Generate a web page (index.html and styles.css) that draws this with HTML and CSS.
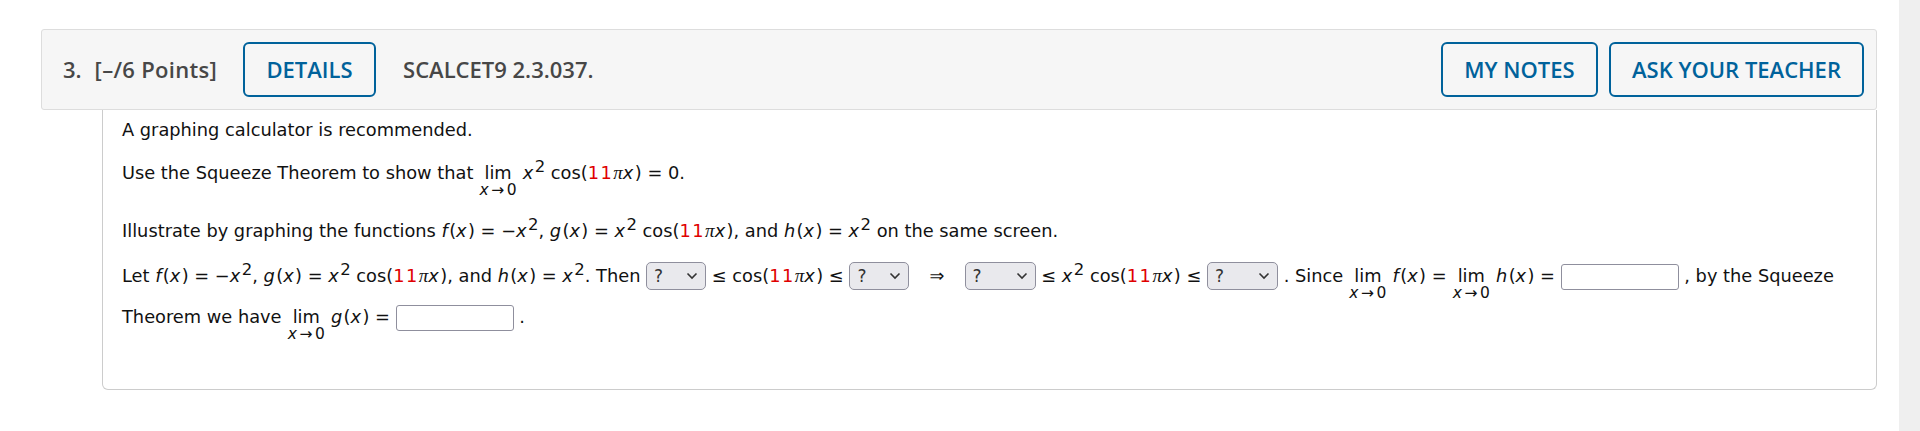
FILE: index.html
```html
<!DOCTYPE html>
<html lang="en">
<head>
<meta charset="utf-8">
<title>SCALCET9 2.3.037.</title>
<link rel="stylesheet" href="styles.css">
</head>
<body>
<div class="page">
  <main class="main">
    <header class="qhead">
      <span class="qnum">3.</span>
      <span class="qpts">[–/6 Points]</span>
      <button class="btn btn-details" type="button">DETAILS</button>
      <span class="qref">SCALCET9 2.3.037.</span>
      <span class="spacer"></span>
      <button class="btn btn-notes" type="button">MY NOTES</button>
      <button class="btn btn-ask" type="button">ASK YOUR TEACHER</button>
    </header>
    <section class="qbody">
      <p class="l1">A graphing calculator is recommended.</p>
      <p class="l2">Use the Squeeze Theorem to show that <span class="lim"><span>lim</span><span class="sub"><i>x</i><span class="to">→</span>0</span></span> <i>x</i><sup>2</sup> cos(<span class="red">11</span><span class="pi">π</span><i>x</i>) = 0.</p>
      <p class="l3">Illustrate by graphing the functions <i>f</i>(<i>x</i>) = −<i>x</i><sup>2</sup>, <i>g</i>(<i>x</i>) = <i>x</i><sup>2</sup> cos(<span class="red">11</span><span class="pi">π</span><i>x</i>), and <i>h</i>(<i>x</i>) = <i>x</i><sup>2</sup> on the same screen.</p>
      <p class="l4">Let <i>f</i>(<i>x</i>) = −<i>x</i><sup>2</sup>, <i>g</i>(<i>x</i>) = <i>x</i><sup>2</sup> cos(<span class="red">11</span><span class="pi">π</span><i>x</i>), and <i>h</i>(<i>x</i>) = <i>x</i><sup>2</sup>. Then <span class="sel"><select><option>?</option></select><svg viewBox="0 0 12 8"><path d="M1.5 1.500 6 6l4.500-4.500"/></svg></span> ≤ cos(<span class="red">11</span><span class="pi">π</span><i>x</i>) ≤ <span class="sel"><select><option>?</option></select><svg viewBox="0 0 12 8"><path d="M1.5 1.500 6 6l4.500-4.500"/></svg></span> <span class="arrow">⇒</span> <span class="sel wide"><select><option>?</option></select><svg viewBox="0 0 12 8"><path d="M1.5 1.500 6 6l4.500-4.500"/></svg></span> ≤ <i>x</i><sup>2</sup> cos(<span class="red">11</span><span class="pi">π</span><i>x</i>) ≤ <span class="sel wide"><select><option>?</option></select><svg viewBox="0 0 12 8"><path d="M1.5 1.500 6 6l4.500-4.500"/></svg></span> . Since <span class="lim"><span>lim</span><span class="sub"><i>x</i><span class="to">→</span>0</span></span> <i>f</i>(<i>x</i>) = <span class="lim"><span>lim</span><span class="sub"><i>x</i><span class="to">→</span>0</span></span> <i>h</i>(<i>x</i>) = <input class="ans" type="text"> , by the Squeeze</p>
      <p class="l5">Theorem we have <span class="lim"><span>lim</span><span class="sub"><i>x</i><span class="to">→</span>0</span></span> <i>g</i>(<i>x</i>) = <input class="ans" type="text"> .</p>
    </section>
  </main>
  <aside class="rail"></aside>
</div>
</body>
</html>
```
FILE: styles.css
```css
html, body {
  margin: 0;
  height: 100%;
  background: #fff;
}
.page {
  display: flex;
  height: 431px;
  overflow: hidden;
}
.main {
  flex: 1;
  padding: 29px 22px 0 41px;
  min-width: 0;
}
.rail {
  width: 21px;
  background: #efefef;
}
.qhead {
  display: flex;
  align-items: center;
  height: 81px;
  box-sizing: border-box;
  padding: 0 12px 0 21px;
  background: #f6f6f6;
  border: 1px solid #ddd;
  border-radius: 3px;
  font: 600 22px/1 "Open Sans", sans-serif;
  color: #474747;
}
.qnum, .qpts, .qref { padding-bottom: 2px; }
.qnum { margin-right: 13px; }
.qpts { margin-right: 26px; letter-spacing: 0.3px; }
.qref { margin-left: 27px; }
.spacer { flex: 1; }
.btn {
  height: 55px;
  box-sizing: border-box;
  background: transparent;
  border: 2px solid #00629b;
  border-radius: 6px;
  color: #00629b;
  font: 600 22px/1 "Open Sans", sans-serif;
  padding: 0 0 2px;
}
.btn-details { width: 133px; }
.btn-notes { width: 157px; margin-right: 11px; }
.btn-ask { width: 255px; }
.qbody {
  margin-left: 61px;
  height: 280px;
  box-sizing: border-box;
  padding: 7px 19px 0 19px;
  border: 1px solid #ccc;
  border-top: 0;
  border-radius: 0 0 6px 6px;
  font: 17.8px/41px "DejaVu Sans", Verdana, sans-serif;
  color: #111;
}
.qbody p { margin: 0; }
.qbody i { letter-spacing: 1.4px; }
.l1 { height: 26px; line-height: 26px; }
.qbody .l2 { margin-top: 17px; height: 42px; line-height: 26px; }
.qbody .l3 { height: 49px; line-height: 34px; padding-top: 12px; box-sizing: border-box; }
.qbody .l4 { margin-top: 4px; line-height: 41px; white-space: nowrap; }
.qbody .l5 { line-height: 41px; }
sup {
  font-size: 16.5px;
  line-height: 0;
  vertical-align: 7px;
}
.red { color: #e00000; letter-spacing: 1.5px; }
.pi { font-family: "Liberation Serif", serif; font-style: italic; font-size: 19px; }
.lim {
  display: inline-flex;
  flex-direction: column;
  align-items: center;
  margin: 0 0.5px;
  line-height: 18px;
  vertical-align: baseline;
}
.sub { font-size: 15.5px; line-height: 15px; margin-top: 1px; height: 0; white-space: nowrap; }
.qbody .sub i { letter-spacing: 0; }
.to { margin: 0 2.5px; }
.arrow { margin: 0 14.5px; }
.sel {
  position: relative;
  display: inline-block;
  vertical-align: 0;
  width: 60px;
  height: 28px;
}
.sel.wide { width: 71px; }
.sel select {
  display: block;
  appearance: none;
  width: 100%;
  height: 100%;
  box-sizing: border-box;
  background: #e9e9ed;
  border: 1px solid #8f8f9d;
  border-radius: 5px;
  padding: 0 0 0 7px;
  font: 17px "DejaVu Sans", sans-serif;
  color: #333;
}
.sel svg {
  position: absolute;
  right: 8px;
  top: 10px;
  width: 12px;
  height: 8px;
  fill: none;
  stroke: #333;
  stroke-width: 1.6;
  pointer-events: none;
}
.ans {
  width: 118px;
  height: 26px;
  box-sizing: border-box;
  vertical-align: 1px;
  background: #fff;
  border: 1px solid #8f8f9d;
  border-radius: 3px;
  padding: 0;
}
```
